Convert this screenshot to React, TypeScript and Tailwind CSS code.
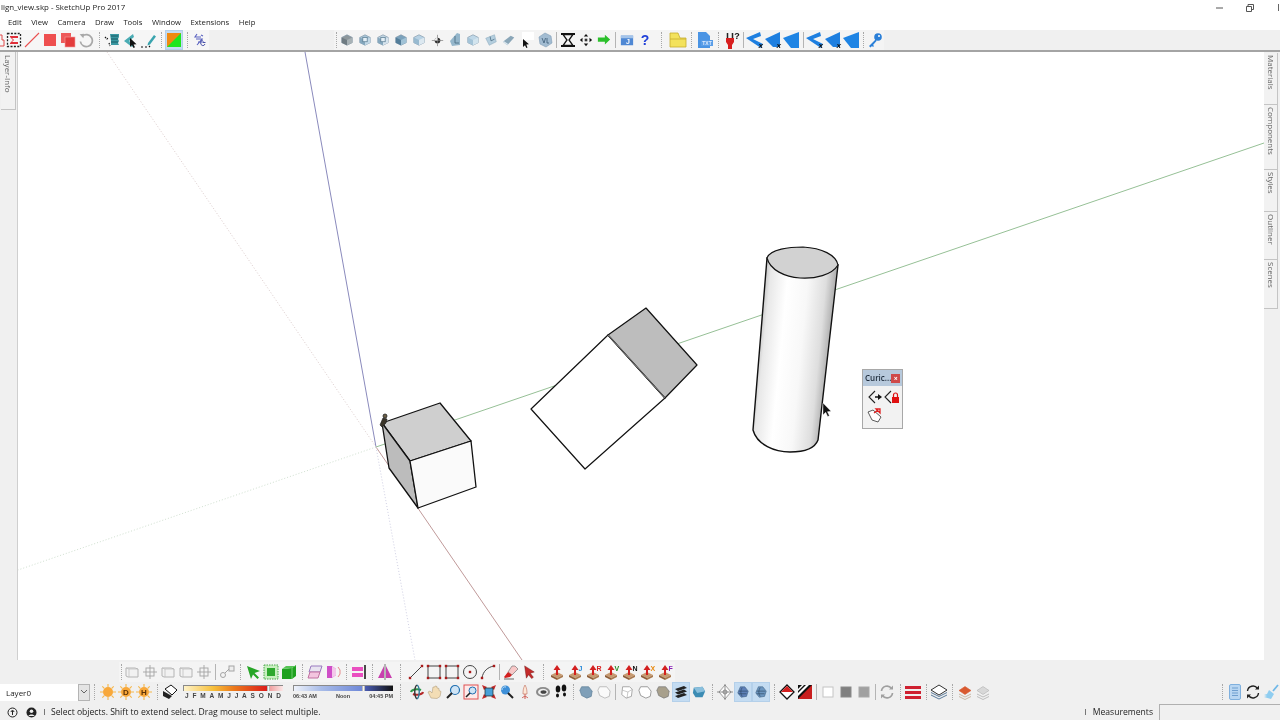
import React from "react";

const font = "[font-family:'Open_Sans','Noto_Sans',sans-serif]";

const S = ({ children, size = 16 }: { children: React.ReactNode; size?: number }) => (
  <svg width={size} height={size} viewBox="0 0 16 16" fill="none">{children}</svg>
);

const Cell = ({ children, on }: { children?: React.ReactNode; on?: boolean }) => (
  <div className={`w-[18px] h-[20px] flex items-center justify-center shrink-0 ${on ? "bg-[#c4dcf2] outline outline-1 outline-[#b4d0ea] -outline-offset-1" : ""}`}>
    {children}
  </div>
);

const Grip = ({ w = "w-[8px]" }: { w?: string }) => (
  <div className={`${w} h-[20px] flex justify-center items-center shrink-0`}>
    <div className="h-[16px] border-l border-dotted border-[#a8a8a8]" />
  </div>
);
const Thin = ({ w = "w-[5px]" }: { w?: string }) => (
  <div className={`${w} h-[20px] flex justify-center items-center shrink-0`}>
    <div className="h-[16px] w-px bg-[#b4b4b4]" />
  </div>
);

const Row = ({ items }: { items: React.ReactNode[] }) => (
  <>
    {items.map((n, i) => (
      <Cell key={i}>{n}</Cell>
    ))}
  </>
);

/* ---------- icons ---------- */
const Cube = ({ top = "#a8c4d6", left = "#86a8be", right = "#c2d8e6", tag }: { top?: string; left?: string; right?: string; tag?: string }) => (
  <svg width="14" height="14" viewBox="0 0 16 16" fill="none">
    <path d="M2 5 8 2l6 3v6l-6 3-6-3z" fill={top} stroke="#7b92a4" strokeWidth=".7" />
    <path d="M2 5l6 3v6l-6-3z" fill={left} />
    <path d="M8 8l6-3v6l-6 3z" fill={right} />
    {tag && <rect x="5.500" y="5" width="5" height="5" fill="#e4eff6" stroke="#55788e" strokeWidth=".8" />}
  </svg>
);
const GreyBox = () => (
  <S>
    <path d="M2 4h9l3 1v8H4l-2-1z" fill="#f2f2f2" stroke="#b4b4b4" />
    <path d="M5 5v8M5 5h9M5 5 2 4" stroke="#c0c0c0" strokeWidth=".8" />
  </S>
);
const GreyAxisBox = () => (
  <S>
    <rect x="4" y="4" width="8" height="8" fill="#f4f4f4" stroke="#aaa" />
    <path d="M8 1v14M1 8h14" stroke="#a4a4a4" strokeWidth=".9" />
  </S>
);
const Arrow3 = ({ l, c }: { l?: string; c?: string }) => (
  <svg width="17" height="17" viewBox="0 0 17 17">
    <path d="M1 11l6-3 6 3-6 3z" fill="#c69a70" />
    <path d="M1 11v2l6 3v-2z" fill="#8e5f3a" />
    <path d="M13 11v2l-6 3v-2z" fill="#a87a50" />
    <path d="M7 1 3.500 6H6v5h2V6h2.500z" fill="#d32020" />
    {l && <text x="10.500" y="6.500" fontSize="7" fontWeight="700" fontFamily="Liberation Sans" fill={c}>{l}</text>}
  </svg>
);
const Node = ({ x, y }: { x: number; y: number }) => <rect x={x - 1.2} y={y - 1.2} width="2.4" height="2.4" fill="#a81c1c" />;
const Sun = ({ l }: { l?: string }) => (
  <S>
    <g stroke="#f5b74a" strokeWidth="1.1">
      <path d="M8 0v3M8 13v3M0 8h3M13 8h3M2.300 2.300l2 2M11.700 11.700l2 2M2.300 13.700l2-2M11.700 4.300l2-2" />
    </g>
    <circle cx="8" cy="8" r="5" fill="#f8a83a" />
    {l && <text x="8" y="10.800" fontSize="8" textAnchor="middle" fontWeight="700" fontFamily="Liberation Sans" fill="#5a3208">{l}</text>}
  </S>
);

const topA = [
  <S key="a">
    <rect x="1.500" y="1.500" width="13" height="13" stroke="#222" strokeWidth="1.300" strokeDasharray="2 1.400" />
    <path d="M4 4h8v2H6l2 2-2 2h6v2H4v-1l3-3-3-3z" fill="#e02f3a" />
  </S>,
  <S key="b"><path d="M1 15 15 1" stroke="#ea5050" strokeWidth="1.100" /></S>,
  <S key="c"><rect x="2" y="2" width="12" height="12" fill="#ee4f4f" /></S>,
  <S key="d">
    <rect x="1" y="1" width="10" height="10" fill="#ee5a5a" />
    <rect x="5" y="5" width="10" height="10" fill="#e33c3c" stroke="#f4a0a0" strokeWidth=".6" />
  </S>,
  <S key="e">
    <path d="M4.200 4.300A6 6 0 1 1 2.400 9.500" stroke="#a8a8a8" strokeWidth="1.700" />
    <path d="M1.600 2.200 6 1.800 5.400 6.200z" fill="#a8a8a8" />
  </S>,
];
const topB = [
  <S key="a">
    <path d="M6 2h9v3l-1 2 1 2-1 2 1 2H7V9z" fill="#3a98a2" />
    <path d="M7 4h7M7 7h7M7 10h7" stroke="#0d3f4a" strokeWidth=".7" />
    <path d="M1 5l2 2 1-1M5 11l1 3" stroke="#111" strokeWidth="1.200" strokeDasharray="1.500 1" />
  </S>,
  <S key="b">
    <path d="M2 9 11 2l1 3-5 4 5 4-2 2z" fill="#4aacb4" />
    <path d="M8 6v9l2-2 1.500 3 1.500-.8-1.500-2.700 3-.3z" fill="#111" />
  </S>,
  <S key="c">
    <path d="M1 15h2M5 15h2M9 14l1 1" stroke="#111" strokeWidth="1.200" />
    <path d="M8 11 14 3l2 1.500-6 8-2.500 1z" fill="#3aa4ae" />
  </S>,
];
const Mix = () => (
  <S>
    <rect x="1" y="1" width="14" height="14" fill="#f08a12" />
    <path d="M15 1v14H1z" fill="#1ee61e" />
  </S>
);
const Tiny = () => (
  <S>
    <path d="M5 2 3 5h6M4 7h6l-5 6M9 3l2 1M6 10h6" stroke="#5a62c0" strokeWidth="1.100" />
    <path d="M11 8a2.300 2.800 0 1 0 2 4M11 10.500h2.500" stroke="#4a52a8" strokeWidth="1" />
  </S>
);

const views = [
  <Cube key="0" top="#8d979c" left="#6f7b82" right="#a8b2b6" />,
  <Cube key="1" tag="a" />,
  <Cube key="2" tag="a" top="#c0d4e2" right="#d6e4ee" />,
  <Cube key="3" top="#7ba2bc" left="#547e9a" right="#a0c2d6" />,
  <Cube key="4" top="#b8d2e4" left="#98bad0" right="#dce8f0" />,
  <svg key="5" width="13" height="13" viewBox="0 0 16 16" fill="none">
    <circle cx="8" cy="8" r="3.500" fill="#333" />
    <path d="M8 1v14M1 8h14" stroke="#777" strokeWidth=".8" />
    <path d="M8 4.500v3.500H4.500a3.500 3.500 0 0 1 3.500-3.500z" fill="#eee" />
  </svg>,
  <S key="6">
    <path d="M3 9 10 1l3 1v11l-8 1z" fill="#94b6cb" />
    <path d="M8 4v7h4" stroke="#4c6f86" strokeWidth=".9" />
  </S>,
  <Cube key="7" top="#c0d8e8" left="#a4c4d8" right="#d2e4ee" />,
  <svg key="8" width="14" height="14" viewBox="0 0 16 16" fill="none">
    <path d="M2 6l10-4 2 8-8 4z" fill="#b4cede" stroke="#8aa8bc" strokeWidth=".6" />
    <path d="M7 4l1 5 4-2" stroke="#4c6f86" strokeWidth=".9" />
  </svg>,
  <svg key="9" width="14" height="14" viewBox="0 0 16 16" fill="none">
    <path d="M1 10 10 3l4 2-8 9z" fill="#8aa6b8" />
    <path d="M1 10l5 4 1-1.300-5-3.700z" fill="#dce8f0" />
  </svg>,
  <S key="10">
    <rect x="3" y="0" width="12" height="8" fill="#fff" />
    <path d="M4 7v8l2-1.800 1.300 2.800 1.200-.6L7.300 12.500l2.700-.3z" fill="#111" />
  </S>,
  <S key="11">
    <path d="M2 5 8 1l6 3 1 7-6 4-6-3z" fill="#a2bcd2" stroke="#7f9cb6" strokeWidth=".6" />
    <path d="M5 6l2 5 1.500-5M10 6v5h2" stroke="#3a5a76" strokeWidth=".8" />
  </S>,
];
const nav = [
  <S key="a"><path d="M3 2.500h10L9 8l4 5.500H3L7 8z" stroke="#111" strokeWidth="1.300" /><path d="M1 2h14M1 14h14" stroke="#111" strokeWidth="1.800" /></S>,
  <svg key="b" width="14" height="14" viewBox="0 0 16 16">
    <path d="M8 1 10.500 4h-5zM8 15l-2.500-3h5zM1 8l3-2.500v5zM15 8l-3 2.500v-5z" fill="#111" />
    <rect x="6.500" y="6.500" width="3" height="3" fill="#333" />
  </svg>,
  <svg key="c" width="14" height="14" viewBox="0 0 16 16"><path d="M1 5h8V2l6 5.500-6 5.500V10H1z" fill="#2cc02c" /></svg>,
];
const help = [
  <svg key="a" width="14" height="14" viewBox="0 0 16 16">
    <rect x="1" y="3" width="14" height="11" fill="#4f88d4" />
    <path d="M1 3h14v3H1z" fill="#a4c4ea" />
    <text x="9" y="13" fontSize="8" fontWeight="700" textAnchor="middle" fontFamily="Liberation Sans" fill="#fff">J</text>
  </svg>,
  <span key="b" className="text-[14px] font-bold text-[#1f3fd8] leading-none [font-family:'Liberation_Sans',sans-serif]">?</span>,
];
const Folder = () => (
  <svg width="18" height="18" viewBox="0 0 18 18">
    <path d="M1 2h8l2 5h6v9H1z" fill="#f3e25c" stroke="#c6ad2e" strokeWidth=".8" />
    <path d="M1 8h16" stroke="#c6ad2e" strokeWidth=".8" fill="none" />
  </svg>
);
const Txt = () => (
  <svg width="18" height="18" viewBox="0 0 18 18">
    <path d="M2 1h8l4 4v4h3v6h-3v2H2z" fill="#4a94e4" />
    <rect x="5" y="9.500" width="12" height="5.500" fill="#5a9ee8" />
    <text x="11" y="14" fontSize="5" fontWeight="700" textAnchor="middle" fontFamily="Liberation Sans" fill="#dbeafe">TXT</text>
  </svg>
);
const Plug = () => (
  <svg width="18" height="18" viewBox="0 0 18 18">
    <path d="M3 7h8v4l-2 3v4H5v-4L3 11z" fill="#d81f1f" />
    <path d="M4.500 2v5M9.500 2v5" stroke="#222" strokeWidth="1.500" />
    <text x="14" y="8" fontSize="9" fontWeight="700" textAnchor="middle" fontFamily="Liberation Sans" fill="#111">?</text>
  </svg>
);
const Wedge = ({ v, x }: { v: number; x?: boolean }) => (
  <svg width="18" height="18" viewBox="0 0 18 18">
    {v === 0 && <path d="M0 7 14 1l1 4-8 3 10 5-2 4z" fill="#1e7fe0" />}
    {v === 1 && <path d="M1 8 16 1v15H9z" fill="#1e7fe0" />}
    {v === 2 && <path d="M1 7 17 1v16H9z" fill="#1e84e4" />}
    {x && <text x="12.500" y="16.500" fontSize="8" fontWeight="700" fontStyle="italic" fontFamily="Liberation Sans" fill="#111">x</text>}
  </svg>
);
const Key = () => (
  <S>
    <circle cx="11" cy="5" r="3.800" fill="#2a7fd8" />
    <circle cx="12" cy="4" r="1" fill="#fff" />
    <path d="M9 7 2 14l1.500 1.500L5 14l1 1 1-1-1-1 3.500-4z" fill="#2a7fd8" />
  </S>
);

const rowA = [<GreyBox key="0" />, <GreyAxisBox key="1" />, <GreyBox key="2" />, <GreyBox key="3" />, <GreyAxisBox key="4" />];
const Pin = () => (
  <S>
    <circle cx="4" cy="11" r="2.500" stroke="#a4a4a4" />
    <path d="M6 9l4-4" stroke="#a4a4a4" />
    <rect x="10" y="2" width="5" height="5" fill="#eee" stroke="#a4a4a4" />
  </S>
);
const greens = [
  <S key="a"><path d="M2 2 15 7 9.500 9 14 13.500 12.500 15 8 10.500 6 15z" fill="#27a527" /></S>,
  <S key="b">
    <rect x="1" y="1" width="14" height="14" fill="#c8efc0" stroke="#4aa84a" strokeDasharray="1.500 1" />
    <rect x="4" y="4" width="8" height="8" fill="#2ea82e" />
  </S>,
  <S key="c">
    <path d="M1 5l10-1 4-3v11l-4 3H1z" fill="#1fa11f" />
    <path d="M11 4v11" stroke="#8fe08f" strokeWidth=".7" />
    <path d="M1 5l4-3h10l-4 2z" fill="#55c455" />
  </S>,
];
const planes = [
  <S key="a">
    <path d="M4 2h11l-2 6H2z" fill="#e8e4f0" stroke="#9a7ac0" />
    <path d="M3 8h10l-2 6H1z" fill="#f3c5df" stroke="#c070a0" />
  </S>,
  <S key="b">
    <path d="M2 2h5l4 3v6l-4 3H2z" fill="#cf4fc8" />
    <path d="M7 2l4 3v6l-4 3z" fill="#f3c8ea" />
    <path d="M13 3l2 3v4l-2 3" stroke="#e58a8a" />
  </S>,
];
const Bars = () => (
  <S>
    <path d="M1 3h11v4H1zM1 9h11v4H1z" fill="#ea4fc0" />
    <path d="M14 1v14" stroke="#111" strokeWidth="1.500" />
  </S>
);
const Mirror = () => (
  <S>
    <path d="M7 2v12H1zM9 2v12h6z" fill="#c83fae" />
    <path d="M8 0v16" stroke="#555" strokeWidth=".8" />
  </S>
);
const draw = [
  <S key="a"><path d="M2 14 14 2" stroke="#444" /><Node x={2} y={14} /><Node x={14} y={2} /></S>,
  <S key="b"><rect x="2" y="2" width="12" height="12" stroke="#444" /><Node x={2} y={2} /><Node x={14} y={2} /><Node x={2} y={14} /><Node x={14} y={14} /></S>,
  <S key="c"><rect x="2" y="2" width="12" height="12" stroke="#444" /><Node x={2} y={2} /><Node x={14} y={2} /><Node x={2} y={14} /><Node x={14} y={14} /></S>,
  <S key="d"><circle cx="8" cy="8" r="6.500" stroke="#444" /><Node x={8} y={8} /></S>,
  <S key="e"><path d="M2 14C3 7 8 3 14 2" stroke="#444" /><Node x={14} y={2} /><Node x={2} y={14} /></S>,
];
const Eraser = () => (
  <S>
    <path d="M9 2h3l3 3-6 6-4-3z" fill="#f8c8c8" stroke="#666" strokeWidth=".6" />
    <path d="M5 8l4 3-2 2-5 1-1-1z" fill="#d32020" />
    <path d="M1 15h10" stroke="#666" />
  </S>
);
const RedCursor = () => (
  <svg width="14" height="14" viewBox="0 0 16 16"><path d="M3 1 14 8 9.500 9.500 13 14 11 15.500 7.500 11 5 15z" fill="#c42b2b" stroke="#6d1515" strokeWidth=".5" /></svg>
);
const cam = [
  <S key="a">
    <path d="M2 8a6 3 0 0 1 10-2" stroke="#2e9a4a" strokeWidth="2" />
    <path d="M14 8a6 3 0 0 1-10 2" stroke="#b42828" strokeWidth="2" />
    <path d="M8 1c-3 2-3 11 0 14" stroke="#333" strokeWidth="1.400" />
    <path d="M8 1c3 2 3 11 0 14" stroke="#2d7a9a" strokeWidth="1.400" />
  </S>,
  <S key="b"><path d="M4 14 1 8l2-1 2 2 1-6 1.500.2L8 2l2 .5v1.500l2 .5v2l2 1-1 5-3 2z" fill="#f3ddb5" stroke="#b4a07e" strokeWidth=".6" /></S>,
  <S key="c"><circle cx="10" cy="6" r="4.500" fill="#cfe4f5" stroke="#1f6fb0" strokeWidth="1.200" /><path d="M7 9l-5 5" stroke="#222" strokeWidth="2" /></S>,
  <S key="d">
    <rect x="1" y="1" width="14" height="14" fill="#fdeaea" stroke="#e05050" />
    <circle cx="9.500" cy="6.500" r="3.500" fill="#cfe4f5" stroke="#1f6fb0" />
    <path d="M7 9l-4 4" stroke="#222" strokeWidth="1.600" />
  </S>,
  <S key="e">
    <path d="M1 1l5 2-3 3zM15 1l-5 2 3 3zM1 15l5-2-3-3zM15 15l-5-2 3-3z" fill="#c42b2b" />
    <rect x="4" y="4" width="8" height="8" fill="#46a0d8" stroke="#222" strokeWidth=".7" />
  </S>,
  <S key="f">
    <circle cx="6.500" cy="6" r="4.500" fill="#3d8fd8" />
    <path d="M9 9l5 5" stroke="#222" strokeWidth="2" />
    <path d="M3 6a3 3 0 0 1 4-3" stroke="#bfe0f8" />
  </S>,
  <S key="g">
    <path d="M8 1c-2 3-2 7-2 9h4c0-2 0-6-2-9z" fill="#fde8d8" stroke="#c06a58" strokeWidth=".6" />
    <path d="M5 14c2-2 4-2 6 0" stroke="#d05a50" />
    <path d="M8 10v5" stroke="#d05a50" />
  </S>,
  <S key="h">
    <ellipse cx="8" cy="8" rx="7" ry="5" fill="#8a8a8a" />
    <ellipse cx="8" cy="8" rx="5" ry="3.200" fill="#eee" />
    <ellipse cx="8.500" cy="8" rx="3" ry="1.800" fill="#444" />
  </S>,
  <S key="i">
    <ellipse cx="5" cy="5" rx="2.300" ry="3.500" fill="#111" />
    <ellipse cx="4.500" cy="11.500" rx="1.500" ry="2" fill="#111" />
    <ellipse cx="11" cy="4" rx="2.300" ry="3.500" fill="#111" />
    <ellipse cx="11.500" cy="10.500" rx="1.500" ry="2" fill="#111" />
  </S>,
];
const Blob = ({ f, s }: { f: string; s: string }) => (
  <svg width="14" height="14" viewBox="0 0 16 16"><path d="M3 2h8l4 5-1 6-5 2-6-3-2-6z" fill={f} stroke={s} strokeWidth=".8" /></svg>
);
const StyleLines = () => (
  <S>
    <path d="M2 5l9-3 3 2-9 3zM2 8.500l9-3 3 2-9 3zM2 12l9-3 3 2-9 3z" fill="#222" />
  </S>
);
const Wire = () => (
  <svg width="14" height="14" viewBox="0 0 16 16" fill="none">
    <path d="M3 2h8l3 3-1 8-6 2-5-4z" fill="#fff" stroke="#8a8a8a" strokeWidth=".8" />
    <path d="M3 6l6 2 5-3M9 8l-1 7" stroke="#a8a8a8" strokeWidth=".7" />
  </svg>
);
const Hatch = () => (
  <svg width="14" height="14" viewBox="0 0 16 16"><path d="M2 3l10-1 3 5-3 7-8 0-3-5z" fill="#3c8cb4" /><path d="M2 3l10-1 3 5-9 2z" fill="#8abfdc" /></svg>
);
const Target = () => (
  <S>
    <path d="M8 1 14 8 8 15 2 8z" fill="#fafafa" stroke="#8a8a8a" strokeWidth=".8" />
    <path d="M8 0v16M0 8h16" stroke="#666" strokeWidth=".7" />
    <circle cx="8" cy="8" r="2" stroke="#666" strokeWidth=".7" />
  </S>
);
const Globe = ({ c }: { c: string }) => (
  <svg width="14" height="14" viewBox="0 0 16 16" fill="none">
    <path d="M5 2h5l4 5-2 6-6 1-4-5z" fill={c} stroke="#3a5a7a" strokeWidth=".6" />
    <path d="M7 3c-2 3-2 7 0 10M3 7h10M3 10h9" stroke="#2a4560" strokeWidth=".7" />
  </svg>
);
const RedBall = () => (
  <S>
    <path d="M8 1 15 8 8 15 1 8z" fill="#fff" stroke="#111" strokeWidth="1.300" />
    <path d="M2 8 8 2l6 6z" fill="#d31f1f" />
  </S>
);
const Diag = () => (
  <S>
    <rect x="1" y="1" width="14" height="14" fill="#111" />
    <path d="M1 15 15 1v14z" fill="#c81e1e" />
    <path d="M1 9 9 1h3L1 12zM1 5l4-4h2L1 7z" fill="#fff" />
  </S>
);
const Sq = ({ f, s }: { f: string; s: string }) => (
  <S><rect x="3" y="3" width="10" height="10" fill={f} stroke={s} /></S>
);
const Sync = ({ c = "#a0a0a0", w = 1.7 }: { c?: string; w?: number }) => (
  <S>
    <path d="M2.500 7a5.500 5.500 0 0 1 10-2.500M13.500 9a5.500 5.500 0 0 1-10 2.500" stroke={c} strokeWidth={w} />
    <path d="M14 1.500v4h-4zM2 14.500v-4h4z" fill={c} />
  </S>
);
const RedLines = () => (
  <svg width="18" height="18" viewBox="0 0 18 18"><path d="M1 3h16v3H1zM1 8h16v3H1zM1 13h16v3H1z" fill="#cf2030" /></svg>
);
const Stack = () => (
  <svg width="18" height="18" viewBox="0 0 18 18" fill="none">
    <path d="M1 12l8 4 8-4M1 9.500l8 4 8-4" stroke="#5a7a9a" />
    <path d="M1 7l8-5 8 5-8 5z" fill="#fff" stroke="#333" />
  </svg>
);
const Layer2 = ({ c }: { c: string }) => (
  <S>
    <path d="M2 10l6 3 6-3M2 12.500l6 3 6-3" stroke={c === "r" ? "#c8b8a8" : "#bcbcbc"} />
    <path d="M2 6.500l6-4 6 4-6 4z" fill={c === "r" ? "#d95a30" : "#d8d8d8"} stroke={c === "r" ? "#d95a30" : "#b0b0b0"} strokeWidth=".6" />
  </S>
);
const DocIcon = () => (
  <svg width="12" height="16" viewBox="0 0 12 16" fill="none"><rect x=".5" y=".5" width="11" height="15" rx="1.500" fill="#b8d6f2" stroke="#7fb0de" /><path d="M3 4h6M3 6.500h6M3 9h6M3 11.500h6" stroke="#6f9fcf" /></svg>
);
const Broom = () => (
  <S><path d="M10 7 15 1" stroke="#6fb8e8" strokeWidth="1.800" /><path d="M6 6l5 4-3 5-7-2 3-1-3-1 3-1z" fill="#8fcdf0" /></S>
);

const Pill = ({ text, y }: { text: string; y: string }) => (
  <div className={`border-b border-r border-[#c4c4c4] bg-[#f2f2f2] ${y} flex items-start justify-center pt-[2px] pl-px`}>
    <span className="[writing-mode:vertical-rl] text-[8px] leading-none text-[#666]">{text}</span>
  </div>
);

export default function App() {
  return (
    <div className={`w-[1280px] h-[720px] overflow-hidden flex flex-col bg-[#f0f0f0] text-[#222] blur-[0.35px] ${font}`}>
      {/* title */}
      <div className="h-[15px] bg-white flex items-center justify-between shrink-0 relative">
        <span className="text-[7.9px] leading-none pl-px text-[#222]">lign_view.skp - SketchUp Pro 2017</span>
        <div className="flex items-center">
          <svg width="10" height="10" viewBox="0 0 10 10" className="mr-[20px]" fill="none"><path d="M1 5h7" stroke="#555" /></svg>
          <svg width="10" height="10" viewBox="0 0 10 10" className="mr-[23px]" fill="none"><path d="M1.500 3.500h5v5h-5zM3 3.500V1.500h5.500v5H6.500" stroke="#555" /></svg>
          <span className="w-[2px] h-[7px] border-l border-[#666]" />
        </div>
      </div>
      {/* menu */}
      <nav className="h-[15px] bg-white flex items-center text-[7.7px] leading-none text-[#222] pl-[8px] gap-[9.500px] shrink-0">
        <span>Edit</span><span>View</span><span>Camera</span><span>Draw</span><span>Tools</span><span>Window</span><span>Extensions</span><span>Help</span>
      </nav>
      {/* top toolbar */}
      <div className="h-[22px] shrink-0 flex items-start bg-[#f0f0f0] border-b-2 border-[#a4a4a4]">
        <div className="flex items-center h-[20px] bg-[#f6f6f6]">
          <div className="w-[5px] h-[20px] flex items-center overflow-hidden">
            <svg width="5" height="14" viewBox="0 0 5 14" fill="none"><path d="M0 2h2v5h2v6H0" stroke="#e04a4a" /></svg>
          </div>
          <Row items={topA} />
          <Grip />
          <Row items={topB} />
          <Grip />
          <Cell on><Mix /></Cell>
          <Grip />
          <Cell><Tiny /></Cell>
        </div>
        <div className="flex items-center h-[20px] ml-[125px] bg-[#f4f4f4]">
          <Grip w="w-[4px]" />
          <Row items={views} />
          <Thin />
          <Row items={nav} />
          <Thin />
          <Row items={help} />
          <Grip w="w-[15px]" />
          <Cell><Folder /></Cell>
          <Grip w="w-[9px]" />
          <Cell><Txt /></Cell>
          <Grip w="w-[9px]" />
          <Cell><Plug /></Cell>
          <Thin />
          <Cell><Wedge v={0} x /></Cell>
          <Cell><Wedge v={1} x /></Cell>
          <Cell><Wedge v={2} /></Cell>
          <Thin w="w-[6px]" />
          <Cell><Wedge v={0} x /></Cell>
          <Cell><Wedge v={1} x /></Cell>
          <Cell><Wedge v={2} /></Cell>
          <Grip w="w-[6px]" />
          <Cell><Key /></Cell>
        </div>
      </div>
      {/* main */}
      <div className="flex-1 flex min-h-0">
        <aside className="w-[18px] shrink-0 bg-[#f0f0f0] border-r border-[#cfcfcf]">
          <div className="ml-[1px] w-[15px] h-[58px] border-r border-b border-[#c4c4c4] bg-[#f2f2f2] flex justify-center pt-[3px]">
            <span className="[writing-mode:vertical-rl] text-[8px] leading-none text-[#666]">Layer-Info</span>
          </div>
        </aside>
        <main className="flex-1 relative bg-white min-w-0">
          <svg className="absolute inset-0 w-full h-full" viewBox="18 52 1246 608" fill="none">
            <defs>
              <linearGradient id="cyl" gradientUnits="userSpaceOnUse" x1="758" y1="345" x2="830" y2="352">
                <stop offset="0" stopColor="#c4c4c4" />
                <stop offset=".08" stopColor="#e8e8e8" />
                <stop offset=".32" stopColor="#ffffff" />
                <stop offset=".6" stopColor="#f8f8f8" />
                <stop offset=".85" stopColor="#dedede" />
                <stop offset="1" stopColor="#aaaaaa" />
              </linearGradient>
            </defs>
            {/* axes */}
            <path d="M305 52 376 447" stroke="#8a8abc" />
            <path d="M376 447 1264 143" stroke="#96c096" />
            <path d="M376 447 522 660" stroke="#c09a9a" />
            <path d="M376 447 107 52" stroke="#dccccc" strokeDasharray="1 2" />
            <path d="M376 447 18 570" stroke="#d0e0d0" strokeDasharray="1 2" />
            <path d="M376 447 415 660" stroke="#d0d0e4" strokeDasharray="1 2" />
            {/* cube */}
            <path d="M382 423 440 403 471 441 410 461z" fill="#cfcfcf" stroke="#111" strokeWidth="1.300" strokeLinejoin="round" />
            <path d="M382 423 410 461 418 508 389 468z" fill="#bcbcbc" stroke="#111" strokeWidth="1.300" strokeLinejoin="round" />
            <path d="M410 461 471 441 476 487 418 508z" fill="#fafafa" stroke="#111" strokeWidth="1.300" strokeLinejoin="round" />
            {/* person */}
            <circle cx="385" cy="416" r="2" fill="#6b5f44" stroke="#222" strokeWidth=".8" />
            <path d="M383 418 387 419 386 423 382 427 380 425z" fill="#3a3428" stroke="#222" strokeWidth=".7" />
            {/* rectangle */}
            <path d="M531 409 608 335 665 398 585 469z" fill="#fff" stroke="#111" strokeWidth="1.200" strokeLinejoin="round" />
            <path d="M608 335 646 308 697 365 665 398z" fill="#bdbdbd" stroke="#111" strokeWidth="1.200" strokeLinejoin="round" />
            <path d="M608 335 665 398" stroke="#777" />
            {/* cylinder */}
            <path d="M767 258 753 430C757 445 775 452 790 452 805 452 815 448 818 440L838 265z" fill="url(#cyl)" stroke="#111" strokeWidth="1.400" />
            <path d="M767 258C770 249 790 247 803 247 822 248 836 255 838 265 832 275 815 279 800 278 785 277 770 270 767 258z" fill="#d2d2d2" stroke="#111" strokeWidth="1.200" />
            {/* cursor */}
            <path d="M823 403v12l2.700-2.700 2 4.200 1.700-.8-2-4 3.600-.4z" fill="#111" stroke="#fff" strokeWidth=".4" />
          </svg>
          {/* floating toolbar */}
          <div className="absolute left-[844px] top-[317px] w-[41px] h-[60px] bg-[#f2f2f2] border border-[#a8a8a8] flex flex-col">
            <div className="h-[16px] bg-[#b7c9dc] flex items-center justify-between pl-[2px] pr-[2px]">
              <span className="text-[8px] leading-none font-semibold text-[#1c2a3a]">Curic...</span>
              <span className="w-[9px] h-[9px] bg-[#cf4a4a] text-white text-[7px] leading-[9px] text-center font-bold">×</span>
            </div>
            <div className="flex items-center pl-[4px] pt-[3px]">
              <svg width="34" height="16" viewBox="0 0 34 16" fill="none">
                <path d="M8 2 2 8l6 6" stroke="#222" strokeWidth="1.100" />
                <path d="M8 8h5" stroke="#111" strokeWidth="1.500" />
                <path d="M11 5l4 3-4 3z" fill="#111" />
                <path d="M24 2l-6 6 6 6" stroke="#222" strokeWidth="1.100" />
                <path d="M25 8h7v6h-7z" fill="#e01010" />
                <path d="M26.500 8V6a2 2 0 0 1 4 0v2" stroke="#e01010" strokeWidth="1.200" />
              </svg>
            </div>
            <div className="pl-[4px] pt-[2px]">
              <svg width="16" height="16" viewBox="0 0 16 16" fill="none">
                <path d="M1 5 6 3l8 7-3 5-6-2z" fill="#fff" stroke="#333" strokeWidth=".8" />
                <path d="M7 6l4-3M9 2h4v4z" stroke="#e02020" strokeWidth="1.300" />
              </svg>
            </div>
          </div>
        </main>
        <aside className="w-[16px] shrink-0 bg-[#f0f0f0] pr-[2px] flex flex-col pt-px">
          <Pill text="Materials" y="h-[52px]" />
          <Pill text="Components" y="h-[65px]" />
          <Pill text="Styles" y="h-[42px]" />
          <Pill text="Outliner" y="h-[48px]" />
          <Pill text="Scenes" y="h-[49px]" />
        </aside>
      </div>
      {/* bottom toolbars */}
      <div className="h-[42px] shrink-0 flex flex-col pt-[2px] border-t-0">
        <div className="h-[20px] flex items-center pl-[119px]">
          <div className="flex items-center h-[20px] bg-[#f4f4f4]">
            <Grip w="w-[4px]" />
            <Row items={rowA} />
            <Thin />
            <Cell><Pin /></Cell>
            <Grip />
            <Row items={greens} />
            <Grip />
            <Row items={planes} />
            <Grip />
            <Cell><Bars /></Cell>
            <Grip />
            <Cell><Mirror /></Cell>
            <Grip w="w-[13px]" />
            <Row items={draw} />
            <Thin />
            <Cell><Eraser /></Cell>
            <Cell><RedCursor /></Cell>
            <Grip w="w-[11px]" />
            <Cell><Arrow3 /></Cell>
            <Cell><Arrow3 l="J" c="#2a8ad8" /></Cell>
            <Cell><Arrow3 l="R" c="#d82020" /></Cell>
            <Cell><Arrow3 l="V" c="#208a20" /></Cell>
            <Cell><Arrow3 l="N" c="#111" /></Cell>
            <Cell><Arrow3 l="X" c="#e88a10" /></Cell>
            <Cell><Arrow3 l="F" c="#8a20b8" /></Cell>
          </div>
        </div>
        <div className="h-[20px] flex items-center">
          <div className="w-[78px] h-[17px] bg-white flex items-center pl-[6px] pt-[2px] text-[8px] leading-none text-[#222]">Layer0</div>
          <div className="w-[12px] h-[17px] bg-[#e4e4e4] border border-[#b4b4b4] flex items-center justify-center">
            <svg width="8" height="6" viewBox="0 0 8 6" fill="none"><path d="M1 1l3 3 3-3" stroke="#666" /></svg>
          </div>
          <Grip w="w-[9px]" />
          <Cell><Sun /></Cell>
          <Cell><Sun l="D" /></Cell>
          <Cell><Sun l="H" /></Cell>
          <Grip />
          <Cell>
            <S>
              <path d="M3 5 9 1l6 5-5 5z" fill="#fff" stroke="#111" />
              <path d="M1 7l9 5-3 3-6-3z" fill="#222" />
            </S>
          </Cell>
          <div className="w-[100px] ml-[4px] shrink-0 flex flex-col">
            <div className="h-[6px] flex border-l border-t border-[#8a8a8a]">
              <div className="w-[83px] bg-[linear-gradient(90deg,#fff3c8,#f6c03c_35%,#ec7a1c_60%,#dc1c1c_100%)]" />
              <div className="w-[3px] bg-[#f4f4f4] border-x border-[#bbb]" />
              <div className="flex-1 bg-[linear-gradient(90deg,#f0a0a0,#fbe8e8)]" />
            </div>
            <div className="flex justify-between text-[6.500px] leading-[8px] pt-px px-[2px] font-bold text-[#444] [font-family:'Liberation_Sans',sans-serif]">
              {"JFMAMJJASOND".split("").map((m, i) => <span key={i}>{m}</span>)}
            </div>
          </div>
          <div className="w-[100px] ml-[10px] shrink-0 flex flex-col">
            <div className="h-[6px] flex border-l border-t border-[#8a8a8a]">
              <div className="w-[68px] bg-[linear-gradient(90deg,#eef2fa,#a8bce8_40%,#6f88d8_100%)]" />
              <div className="w-[3px] bg-[#f4f4f4] border-x border-[#bbb]" />
              <div className="flex-1 bg-[linear-gradient(90deg,#4a5cb4,#111)]" />
            </div>
            <div className="flex justify-between text-[5.500px] leading-[8px] pt-px font-bold text-[#444] [font-family:'Liberation_Sans',sans-serif]">
              <span>06:43 AM</span><span>Noon</span><span>04:45 PM</span>
            </div>
          </div>
          <Grip w="w-[15px]" />
          <Row items={cam} />
          <Grip w="w-[7px]" />
          <Cell><Blob f="#7f9fb8" s="#5f7f98" /></Cell>
          <Cell><Blob f="#fafafa" s="#a8a8a8" /></Cell>
          <Thin />
          <Cell><Wire /></Cell>
          <Cell><Blob f="#fff" s="#777" /></Cell>
          <Cell><Blob f="#a8a08c" s="#777" /></Cell>
          <Cell on><StyleLines /></Cell>
          <Cell><Hatch /></Cell>
          <Grip />
          <Cell><Target /></Cell>
          <Cell on><Globe c="#5d80b8" /></Cell>
          <Cell on><Globe c="#6c96c0" /></Cell>
          <Grip />
          <Cell><RedBall /></Cell>
          <Cell><Diag /></Cell>
          <Thin />
          <Cell><Sq f="#fff" s="#c4c4c4" /></Cell>
          <Cell><Sq f="#808080" s="#8a8a8a" /></Cell>
          <Cell><Sq f="#a0a0a0" s="#a8a8a8" /></Cell>
          <Thin />
          <Cell><Sync /></Cell>
          <Grip />
          <Cell><RedLines /></Cell>
          <Grip />
          <Cell><Stack /></Cell>
          <Grip />
          <Cell><Layer2 c="r" /></Cell>
          <Cell><Layer2 c="g" /></Cell>
          <div className="ml-auto flex items-center">
            <Grip />
            <Cell><DocIcon /></Cell>
            <Cell><Sync c="#222" w={1.400} /></Cell>
            <Cell><Broom /></Cell>
          </div>
        </div>
      </div>
      {/* status */}
      <footer className="h-[18px] shrink-0 flex items-center text-[8.600px] leading-none text-[#222] relative pt-[2px]">
        <div className="w-[12px] ml-[6px] flex justify-center">
          <svg width="11" height="11" viewBox="0 0 11 11" fill="none"><circle cx="5.500" cy="5.500" r="4.500" stroke="#222" /><path d="M5.500 8V4M3.800 5l1.700-2 1.700 2" stroke="#222" /></svg>
        </div>
        <div className="w-[12px] ml-[7px] flex justify-center">
          <svg width="11" height="11" viewBox="0 0 11 11"><circle cx="5.500" cy="5.500" r="5" fill="#222" /><circle cx="5.500" cy="4.200" r="1.800" fill="#eee" /><path d="M2.500 9c.5-2 5.500-2 6 0z" fill="#eee" /></svg>
        </div>
        <span className="ml-[7px] w-px h-[6px] bg-[#777]" />
        <span className="ml-[6px]">Select objects. Shift to extend select. Drag mouse to select multiple.</span>
        <span className="ml-auto w-px h-[6px] bg-[#777] mr-[7px]" />
        <span className="mr-[6px]">Measurements</span>
        <div className="w-[121px] h-[16px] self-end border-t border-l border-[#b0b0b0]" />
      </footer>
    </div>
  );
}
